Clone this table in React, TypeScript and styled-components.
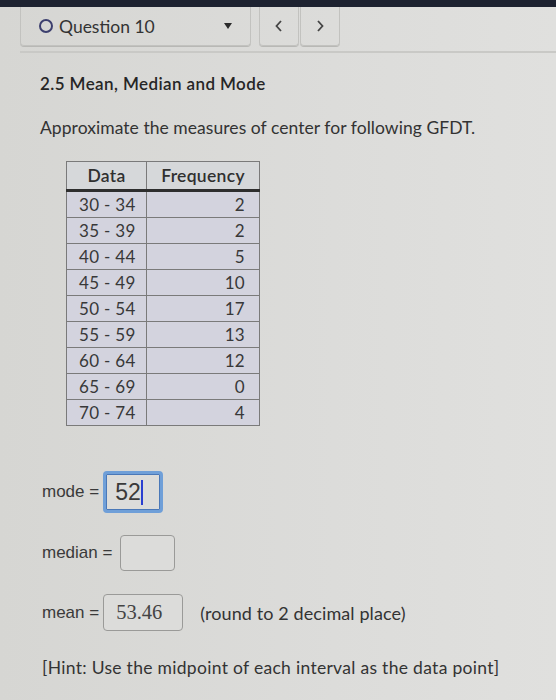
import React from "react";
import styled, { createGlobalStyle } from "styled-components";

const Global = createGlobalStyle`
  html, body { margin: 0; padding: 0; }
  body {
    background: #d9d9d6;
    font-family: Lato, "Open Sans", sans-serif;
    color: #2e2e2e;
    width: 556px;
    height: 700px;
    overflow: hidden;
  }
`;

const Page = styled.div`
  width: 556px;
  height: 700px;
  background: linear-gradient(90deg, #d6d6d3 0%, #dcdcda 60%, #e0e0de 100%);
`;

const TopBand = styled.div`
  height: 7px;
  background: #1d2230;
`;

const Toolbar = styled.div`
  display: flex;
  align-items: stretch;
  gap: 8px;
  padding: 0 0 0 20px;
  height: 39px;
`;

const QuestionSelect = styled.div`
  width: 231px;
  box-sizing: border-box;
  border: 1px solid #c2c2bf;
  border-top: none;
  border-radius: 0 0 4px 4px;
  box-shadow: 0 1px 0 #b8b8b5;
  display: flex;
  align-items: center;
  padding: 0 18px 0 18px;
  font-size: 17.5px;
  color: #333;
`;

const Circle = styled.span`
  width: 10px;
  height: 10px;
  border: 2px solid #3c3f6e;
  border-radius: 50%;
  margin-right: 6px;
`;

const Caret = styled.span`
  margin-left: auto;
  width: 0;
  height: 0;
  border-left: 4px solid transparent;
  border-right: 4px solid transparent;
  border-top: 6px solid #2b2b2b;
`;

const NavGroup = styled.div`
  display: flex;
`;

const NavButton = styled.div`
  width: 40px;
  box-sizing: border-box;
  border: 1px solid #c2c2bf;
  border-top: none;
  border-radius: 0 0 4px 4px;
  box-shadow: 0 1px 0 #b8b8b5;
  display: flex;
  align-items: center;
  justify-content: center;
  color: #444;
  & + & { margin-left: 1px; }
`;

const Divider = styled.div`
  margin: 5px 0 0 20px;
  border-top: 2px solid #c9c9c6;
`;

const Content = styled.div`
  padding: 0 0 0 40px;
`;

const Title = styled.div`
  margin-top: 20px;
  font-size: 17px;
  font-weight: 600;
  color: #262626;
  letter-spacing: 0.4px;
`;

const Prompt = styled.div`
  margin-top: 23px;
  font-size: 17.5px;
  color: #333;
  letter-spacing: 0.05px;
`;

const Table = styled.table`
  margin: 23px 0 0 26px;
  border-collapse: collapse;
  table-layout: fixed;
  width: 193px;
  background: #d3d3de;
  border: 1px solid #7a7a7a;
  font-size: 17px;
  color: #383838;
  white-space: nowrap;
`;

const Col = styled.col<{ $w: number }>`
  width: ${(p) => p.$w}px;
`;

const HeadCell = styled.th`
  height: 27px;
  padding: 0;
  font-size: 17.5px;
  font-weight: 600;
  background: #d6d8da;
  border-right: 1px solid #7a7a7a;
  border-bottom: 3px solid #2e2e2e;
  color: #303030;
  letter-spacing: 0.3px;
`;

const Cell = styled.td<{ $num?: boolean }>`
  height: 25px;
  padding: 0 ${(p) => (p.$num ? "14px" : "12px")};
  text-align: ${(p) => (p.$num ? "right" : "left")};
  border-right: 1px solid #7a7a7a;
  border-bottom: 1px solid #7a7a7a;
  letter-spacing: 0.3px;
`;

const AnswerRow = styled.div<{ $top: number }>`
  display: flex;
  align-items: center;
  margin-top: ${(p) => p.$top}px;
  margin-left: 2px;
`;

const Label = styled.span<{ $gap?: number }>`
  font-family: "Liberation Sans", Arial, sans-serif;
  font-size: 17px;
  color: #3a3a3a;
  margin-right: ${(p) => p.$gap ?? 4}px;
`;

const InputBox = styled.div<{ $w: number; $h: number; $focus?: boolean }>`
  box-sizing: border-box;
  width: ${(p) => p.$w}px;
  height: ${(p) => p.$h}px;
  border: ${(p) => (p.$focus ? "3px solid #6f9fd8" : "1px solid #9a9a98")};
  border-radius: 4px;
  box-shadow: ${(p) => (p.$focus ? "inset 0 0 0 1px #4a78b8" : "none")};
  display: flex;
  align-items: center;
  padding-left: ${(p) => (p.$focus ? 9 : 12)}px;
  background: #dcdcda;
`;

const TypedText = styled.span`
  font-family: "Liberation Sans", Arial, sans-serif;
  font-size: 23px;
  color: #3a3a3a;
`;

const Cursor = styled.span`
  display: inline-block;
  width: 2px;
  height: 25px;
  background: #2a3fd0;
  vertical-align: middle;
`;

const SerifValue = styled.span`
  font-family: "Liberation Serif", "Times New Roman", serif;
  font-size: 20.5px;
  color: #444;
`;

const Note = styled.span`
  margin-left: 17px;
  font-size: 18px;
  color: #333;
  letter-spacing: 0.1px;
`;

const Hint = styled.div`
  margin-top: 26px;
  margin-left: 2px;
  font-size: 17.5px;
  color: #333;
  letter-spacing: 0.3px;
`;

const rows: [string, number][] = [
  ["30 - 34", 2],
  ["35 - 39", 2],
  ["40 - 44", 5],
  ["45 - 49", 10],
  ["50 - 54", 17],
  ["55 - 59", 13],
  ["60 - 64", 12],
  ["65 - 69", 0],
  ["70 - 74", 4],
];

export default function App() {
  return (
    <Page>
      <Global />
      <TopBand />
      <Toolbar>
        <QuestionSelect>
          <Circle />
          Question 10
          <Caret />
        </QuestionSelect>
        <NavGroup>
          <NavButton>
            <svg width="10" height="14" viewBox="0 0 10 14">
              <path d="M7 2 L2.5 7 L7 12" fill="none" stroke="#444" strokeWidth="1.8" />
            </svg>
          </NavButton>
          <NavButton>
            <svg width="10" height="14" viewBox="0 0 10 14">
              <path d="M3 2 L7.5 7 L3 12" fill="none" stroke="#444" strokeWidth="1.8" />
            </svg>
          </NavButton>
        </NavGroup>
      </Toolbar>
      <Divider />
      <Content>
        <Title>2.5 Mean, Median and Mode</Title>
        <Prompt>Approximate the measures of center for following GFDT.</Prompt>
        <Table>
          <colgroup>
            <Col $w={80} />
            <Col $w={113} />
          </colgroup>
          <thead>
            <tr>
              <HeadCell>Data</HeadCell>
              <HeadCell>Frequency</HeadCell>
            </tr>
          </thead>
          <tbody>
            {rows.map(([d, f]) => (
              <tr key={d}>
                <Cell>{d}</Cell>
                <Cell $num>{f}</Cell>
              </tr>
            ))}
          </tbody>
        </Table>
        <AnswerRow $top={45}>
          <Label>mode =</Label>
          <InputBox $w={60} $h={42} $focus>
            <TypedText>52</TypedText>
            <Cursor />
          </InputBox>
        </AnswerRow>
        <AnswerRow $top={22}>
          <Label $gap={8}>median =</Label>
          <InputBox $w={55} $h={36} />
        </AnswerRow>
        <AnswerRow $top={23}>
          <Label>mean =</Label>
          <InputBox $w={80} $h={37}>
            <SerifValue>53.46</SerifValue>
          </InputBox>
          <Note>(round to 2 decimal place)</Note>
        </AnswerRow>
        <Hint>[Hint: Use the midpoint of each interval as the data point]</Hint>
      </Content>
    </Page>
  );
}
